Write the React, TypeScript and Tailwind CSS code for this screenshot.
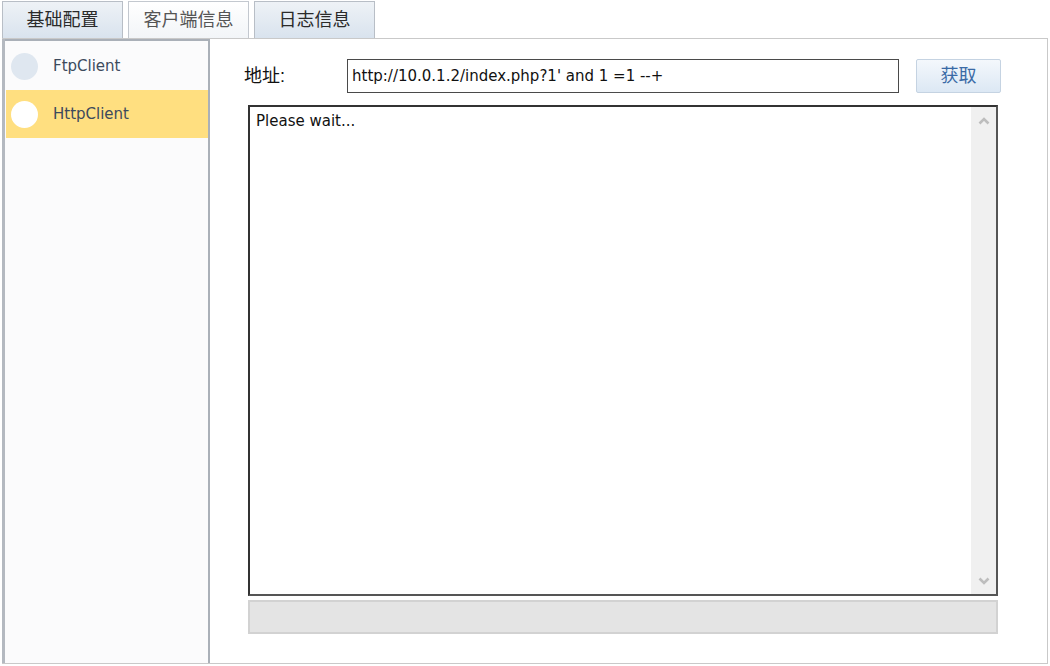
const font = { fontFamily: '"Liberation Sans", "Noto Sans CJK SC", sans-serif' };
const latin = { fontFamily: '"DejaVu Sans", "Noto Sans CJK SC", sans-serif' };

// ─── Tabs ───
function Tab({ label, active }: { label: string; active?: boolean }) {
    return (
        <div
            className={`flex items-center justify-center h-[37px] mt-[1px] border border-b-0 text-[18px] ${active
                ? 'w-[121px] border-[#c3c8cf] bg-gradient-to-b from-[#ffffff] to-[#f2f5f8] text-[#555]'
                : 'w-[121px] border-[#b8bec6] bg-gradient-to-b from-[#eef2f6] to-[#d9e3ee] text-[#2a2a2a]'
                }`}
        >
            {label}
        </div>
    );
}

// ─── Left client list item ───
function ClientItem({ name, selected }: { name: string; selected?: boolean }) {
    return (
        <div className={`flex items-center h-[48px] ${selected ? 'bg-[#ffdf80]' : ''}`}>
            <div className={`w-[27px] h-[27px] rounded-full ml-[5px] ${selected ? 'bg-white' : 'bg-[#dfe7f0]'}`} />
            <span className="ml-[15px] text-[15px] text-[#3d4a5c]" style={latin}>{name}</span>
        </div>
    );
}

function Chevron({ down }: { down?: boolean }) {
    return (
        <svg width="12" height="8" viewBox="0 0 12 8" className={down ? 'rotate-180' : ''}>
            <polyline points="1.5,6.5 6,2 10.5,6.5" fill="none" stroke="#bdbdbd" strokeWidth="2.6" />
        </svg>
    );
}

export default function App() {
    return (
        <div className="w-[1050px] h-[666px] bg-white flex flex-col overflow-hidden" style={font}>
            {/* Tab strip */}
            <div className="flex items-end gap-[5px] pl-[2px] h-[38px] shrink-0">
                <Tab label="基础配置" />
                <Tab label="客户端信息" active />
                <Tab label="日志信息" />
            </div>

            {/* Main panel */}
            <div className="flex flex-1 border-t border-r border-b border-[#c9c9c9] ml-[2px] mr-[2px] mb-[2px] min-h-0">
                {/* Client list */}
                <div className="w-[208px] shrink-0 border-l-[3px] border-l-[#b4b9c0] flex">
                    <div className="flex-1 border-t-2 border-r-2 border-[#aab0b8] bg-[#fbfbfc] pt-[1px] pl-[1px]">
                        <ClientItem name="FtpClient" />
                        <ClientItem name="HttpClient" selected />
                    </div>
                </div>

                {/* Content */}
                <div className="flex-1 flex flex-col pt-[20px]">
                    <div className="flex items-center h-[34px]">
                        <span className="ml-[34px] w-[103px] text-[18px] text-[#111]">地址:</span>
                        <div className="w-[552px] h-[34px] border border-[#4a4a4a] flex items-center px-[4px] text-[15px] text-[#111]" style={latin}>
                            http://10.0.1.2/index.php?1' and 1 =1 --+
                        </div>
                        <button className="ml-[17px] w-[85px] h-[34px] border border-[#c5d3e2] rounded-[2px] bg-gradient-to-b from-[#f4f8fc] to-[#dce8f4] text-[18px] text-[#3a6aa6]">
                            获取
                        </button>
                    </div>

                    <div className="ml-[38px] mt-[12px] w-[750px] h-[491px] border-2 border-[#333] border-r-[#555] border-b-[#555] flex">
                        <div className="flex-1 px-[6px] pt-[3px] text-[15px] text-[#111]" style={latin}>Please wait...</div>
                        <div className="w-[25px] bg-[#f0f0f0] flex flex-col items-center justify-between pt-[10px] pb-[9px]">
                            <Chevron />
                            <Chevron down />
                        </div>
                    </div>

                    <div className="ml-[38px] mt-[4px] w-[750px] h-[34px] bg-[#e4e4e4] border-2 border-[#d2d2d2]" />
                </div>
            </div>
        </div>
    );
}
